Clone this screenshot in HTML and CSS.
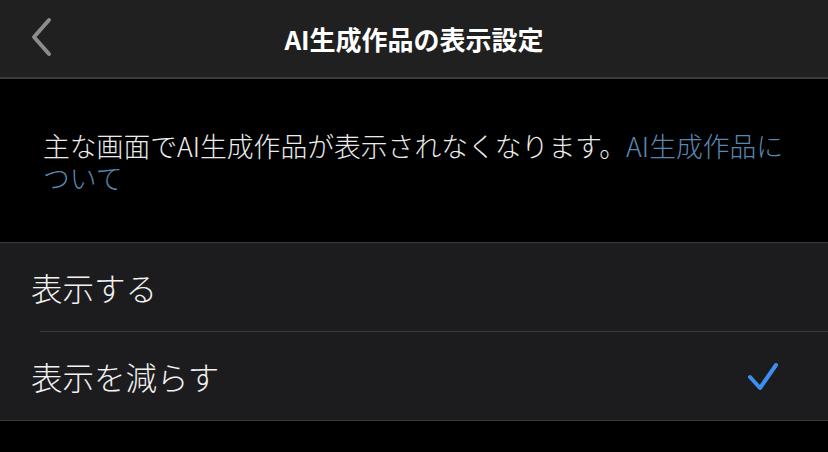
FILE: index.html
```html
<!DOCTYPE html>
<html lang="ja">
<head>
<meta charset="utf-8">
<link rel="stylesheet" href="styles.css">
</head>
<body>
<header class="nav">
  <span class="back">
    <svg width="24" height="40" viewBox="0 0 24 40"><path d="M20 3 L5 20 L20 37" fill="none" stroke="#8c8c8c" stroke-width="4" stroke-linecap="round" stroke-linejoin="round"/></svg>
  </span>
  <h1 class="title">AI生成作品の表示設定</h1>
</header>
<section class="desc">
  <p>主な画面でAI生成作品が表示されなくなります。<span class="link">AI生成作品について</span></p>
</section>
<ul class="options">
  <li class="option">表示する</li>
  <li class="option">表示を減らす
    <svg class="check" width="34" height="32" viewBox="0 0 34 32"><path d="M4 16 L14 27 L30 4" fill="none" stroke="#3d8ef0" stroke-width="4" stroke-linecap="round" stroke-linejoin="round"/></svg>
  </li>
</ul>
</body>
</html>
```
FILE: styles.css
```css
html, body {
  margin: 0;
  padding: 0;
  background: #000;
  font-family: "Noto Sans CJK JP", "Noto Sans", sans-serif;
  color: #fff;
}
.nav {
  position: relative;
  height: 77px;
  background: #202020;
  border-bottom: 2px solid #3b3b3b;
  display: flex;
  align-items: center;
  justify-content: center;
}
.back {
  position: absolute;
  left: 29px;
  top: 17px;
  display: flex;
}
.title {
  margin: 0;
  font-size: 26px;
  font-weight: 700;
  line-height: 32px;
}
.desc {
  padding: 51px 30px 48px 43px;
}
.desc p {
  margin: 0;
  font-size: 26.8px;
  line-height: 32px;
  font-weight: 300;
  color: #ececec;
}
.link {
  color: #5a87b0;
}
.options {
  list-style: none;
  margin: 0;
  padding: 0;
  background: #1c1c1e;
  border-top: 1px solid #3a3a3c;
  border-bottom: 1px solid #3a3a3c;
}
.option {
  position: relative;
  height: 88px;
  display: flex;
  align-items: center;
  justify-content: space-between;
  padding: 0 48px 0 31px;
  font-size: 31.5px;
  font-weight: 300;
  color: #f2f2f2;
}
.option + .option {
  height: 89px;
  padding-top: 1px;
  box-sizing: border-box;
}
.option + .option::before {
  content: "";
  position: absolute;
  left: 40px;
  right: 0;
  top: 0;
  height: 1px;
  background: #3a3a3c;
}
.check {
  margin-top: 2px;
}
```
